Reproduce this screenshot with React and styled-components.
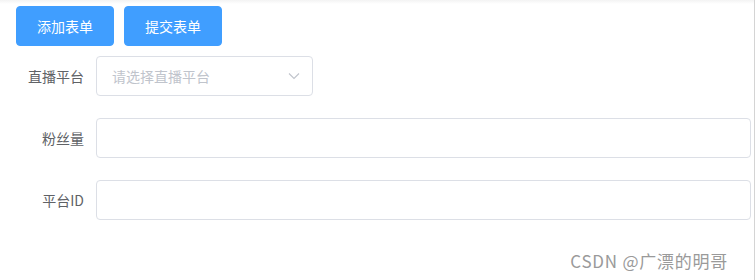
import React from "react";
import styled, { createGlobalStyle } from "styled-components";

const Global = createGlobalStyle`
  html, body { margin: 0; padding: 0; background: #fff; }
  body { font-family: "Noto Sans CJK SC", "Noto Sans", sans-serif; }
  * { box-sizing: border-box; }
`;

const Page = styled.div`
  position: relative;
  width: 755px;
  height: 280px;
  border-right: 1px solid #d4d4d4;
  background: linear-gradient(#f3f3f3, #fff 4px);
  padding: 6px 0 0 16px;
`;

const Toolbar = styled.div`
  display: flex;
  gap: 10px;
  margin-bottom: 10px;
`;

const Button = styled.button`
  height: 40px;
  width: 98px;
  border: 1px solid #409eff;
  background: #409eff;
  color: #fff;
  border-radius: 4px;
  font-family: inherit;
  font-size: 14px;
  padding: 0;
  cursor: pointer;
`;

const Row = styled.div`
  display: flex;
  align-items: center;
  margin-bottom: 22px;
  padding-right: 3px;
`;

const Label = styled.label`
  width: 80px;
  padding-right: 12px;
  text-align: right;
  color: #606266;
  font-size: 14px;
  line-height: 40px;
`;

const SelectBox = styled.div`
  width: 217px;
  height: 40px;
  border: 1px solid #dcdfe6;
  border-radius: 4px;
  display: flex;
  align-items: center;
  justify-content: space-between;
  padding: 0 12px 0 15px;
  color: #c0c4cc;
  font-size: 14px;
`;

const Input = styled.input`
  flex: 1;
  height: 40px;
  border: 1px solid #dcdfe6;
  border-radius: 4px;
  outline: none;
  padding: 0 15px;
  font-family: inherit;
  font-size: 14px;
  color: #606266;
`;

const Watermark = styled.div`
  position: absolute;
  right: 26px;
  bottom: 7px;
  font-size: 17px;
  color: #9a9a9a;
  letter-spacing: 0.75px;
  text-shadow: 0 0 1px rgba(255,255,255,0.8);
`;

const Chevron = () => (
  <svg width="12" height="8" viewBox="0 0 12 8" fill="none">
    <path d="M1 1.5 L6 6.5 L11 1.5" stroke="#c0c4cc" strokeWidth="1.1" />
  </svg>
);

export default function App() {
  return (
    <>
      <Global />
      <Page>
        <Toolbar>
          <Button>添加表单</Button>
          <Button>提交表单</Button>
        </Toolbar>
        <Row>
          <Label>直播平台</Label>
          <SelectBox>
            <span>请选择直播平台</span>
            <Chevron />
          </SelectBox>
        </Row>
        <Row>
          <Label>粉丝量</Label>
          <Input />
        </Row>
        <Row>
          <Label>平台ID</Label>
          <Input />
        </Row>
        <Watermark>CSDN @广漂的明哥</Watermark>
      </Page>
    </>
  );
}
